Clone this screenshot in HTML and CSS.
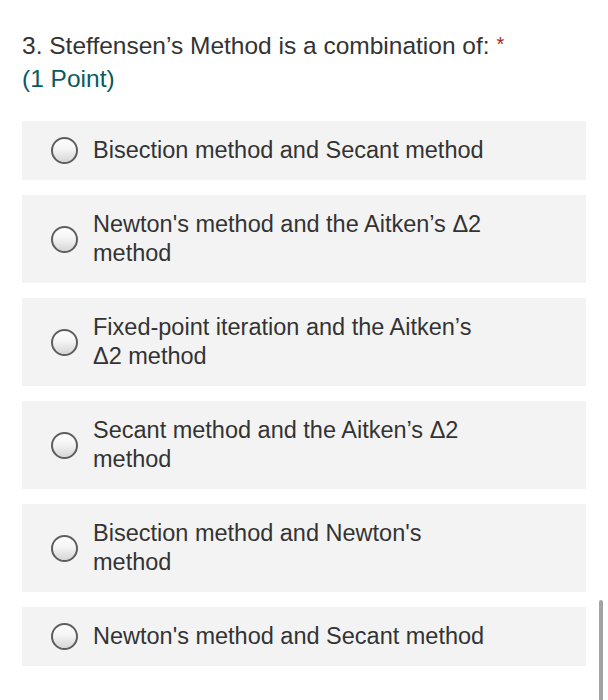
FILE: index.html
```html
<!DOCTYPE html>
<html>
<head>
<meta charset="utf-8">
<link rel="stylesheet" href="styles.css">
</head>
<body>
<div class="page">
  <div class="question">
    <div class="title">3. Steffensen’s Method is a combination of: <span class="req">*</span></div>
    <div class="points">(1 Point)</div>
  </div>
  <div class="options">
    <div class="option"><span class="radio"></span><span class="label">Bisection method and Secant method</span></div>
    <div class="option"><span class="radio"></span><span class="label">Newton's method and the Aitken’s Δ2 method</span></div>
    <div class="option"><span class="radio"></span><span class="label">Fixed-point iteration and the Aitken’s Δ2 method</span></div>
    <div class="option"><span class="radio"></span><span class="label">Secant method and the Aitken’s Δ2 method</span></div>
    <div class="option"><span class="radio"></span><span class="label">Bisection method and Newton's method</span></div>
    <div class="option"><span class="radio"></span><span class="label">Newton's method and Secant method</span></div>
  </div>
  <div class="scrollbar"></div>
</div>
</body>
</html>
```
FILE: styles.css
```css
html, body {
  margin: 0;
  padding: 0;
  background: #ffffff;
}
body {
  font-family: "Liberation Sans", Arial, sans-serif;
  color: #333333;
  width: 608px;
  height: 700px;
  overflow: hidden;
}
.page {
  position: relative;
  padding: 28px 22px 0 22px;
  width: 564px;
  height: 672px;
}
.question {
  font-size: 24.5px;
  line-height: 33px;
}
.title {
  color: #333333;
}
.req {
  color: #a4262c;
  font-size: 20px;
  vertical-align: 3px;
}
.points {
  color: #0b5a5e;
}
.options {
  margin-top: 26px;
  display: flex;
  flex-direction: column;
  gap: 15px;
}
.option {
  display: flex;
  align-items: center;
  gap: 15px;
  background: #f3f3f3;
  padding: 15px 0 15px 29px;
  font-size: 23.5px;
  line-height: 29px;
}
.radio {
  flex: none;
  width: 23px;
  height: 23px;
  border: 2px solid #5e5e5e;
  border-radius: 50%;
  background: linear-gradient(#ffffff 0%, #f4f4f4 45%, #d6d6d6 100%);
}
.label {
  max-width: 400px;
}
.scrollbar {
  position: absolute;
  left: 599px;
  top: 600px;
  width: 4px;
  height: 110px;
  border-radius: 2px;
  background: #a3a3a3;
}
```
